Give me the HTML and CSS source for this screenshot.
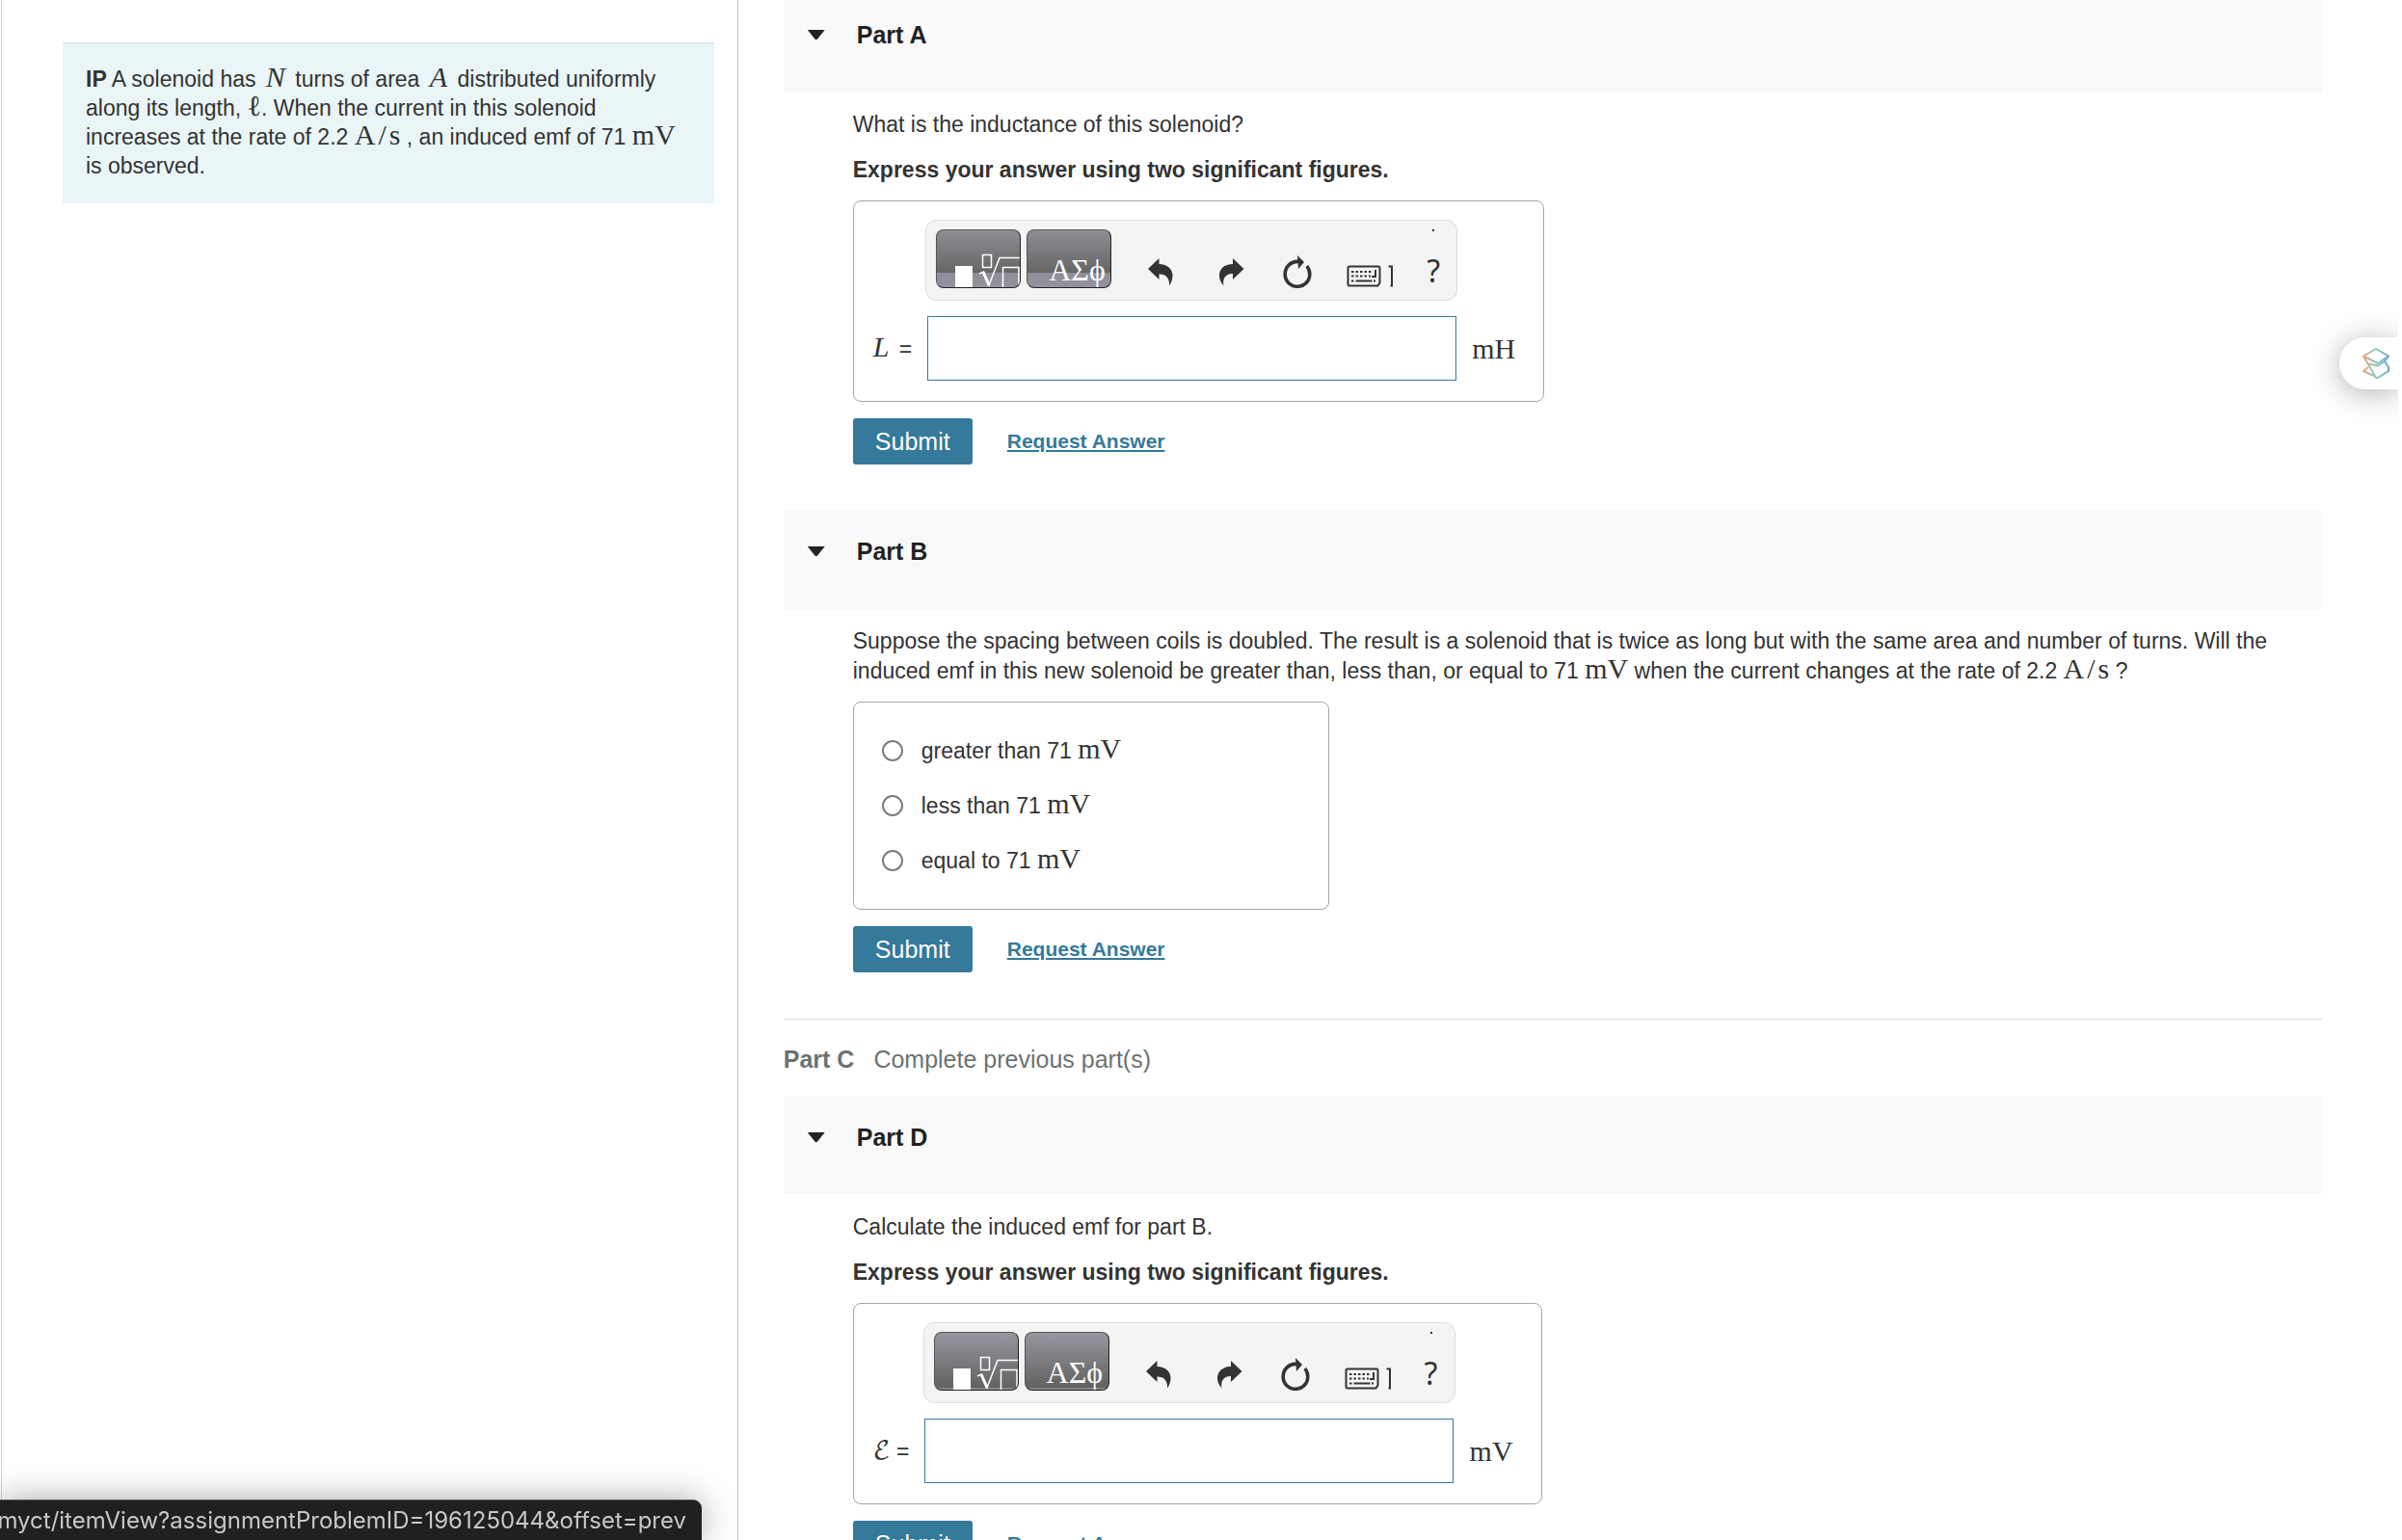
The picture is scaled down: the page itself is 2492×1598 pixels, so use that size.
FILE: index.html
```html
<!DOCTYPE html>
<html lang="en">
<head>
<meta charset="utf-8">
<meta name="viewport" content="width=device-width, initial-scale=1">
<title>Solenoid inductance</title>
<link rel="stylesheet" href="styles.css">
</head>
<body>
<svg class="sprite" aria-hidden="true">
  <symbol id="i-template" viewBox="0 0 88 61">
    <path d="M20 38h18v23H20z" fill="#fff"/>
    <path d="M48.500 26.500h9v13h-9z" fill="none" stroke="#fff" stroke-width="1.500"/>
    <path d="M45 46l4-2 6 14L66 29.500h22" fill="none" stroke="#fff" stroke-width="1.500"/>
    <path d="M49 44l6 14" fill="none" stroke="#fff" stroke-width="3"/>
    <path d="M69.500 61V39.500H86V61" fill="none" stroke="#fff" stroke-width="1.500"/>
  </symbol>
  <symbol id="i-undo" viewBox="0 0 26 30">
    <path d="M0 11L11.500 0v6C20 6 25.500 11 25.500 18c0 4-1.500 8-3.500 10.500C22.500 21 19 16.500 11.500 16.500V22z" fill="#333"/>
  </symbol>
  <symbol id="i-redo" viewBox="0 0 26 30">
    <path d="M25.500 11L14 0v6C5.500 6 0 11 0 18c0 4 2 8 4.500 10.500C3 21 6.500 16 14 16v6z" fill="#333"/>
  </symbol>
  <symbol id="i-reset" viewBox="0 0 30 34">
    <path d="M16.500 6.500C9 5.500 2.200 11.500 2.200 19.500c0 7.500 5.800 12.800 12.800 12.800s12.800-5.500 12.800-12.800c0-3.500-1-6-3-8.500" fill="none" stroke="#333" stroke-width="3.600"/>
    <path d="M15 0l7 7-6 7z" fill="#333"/>
  </symbol>
  <symbol id="i-keyboard" viewBox="0 0 50 24">
    <path d="M3 1.500h30q1.500 0 1.500 1.500v15.500l-2 3H3q-1.500 0-1.500-1.500V3Q1.500 1.500 3 1.500z" fill="none" stroke="#333" stroke-width="2"/>
    <path d="M5 7h22M5 11.500h20M5 16.500h3M28 16.500h2" fill="none" stroke="#333" stroke-width="2" stroke-dasharray="2.500 2"/>
    <path d="M9.500 16.500h17M30 5v8M26 12h5" fill="none" stroke="#333" stroke-width="2"/>
    <path d="M43.500 1.500h3.500V21.500h-1.500" fill="none" stroke="#333" stroke-width="2"/>
  </symbol>
</svg>

<div class="layout">
  <aside class="sidebar">
    <section class="problem">
      <p><b>IP</b> A solenoid has <i class="math">N</i> turns of area <i class="math">A</i> distributed uniformly along its length, <span class="math">ℓ</span>. When the current in this solenoid increases at the rate of 2.2 <span class="math">A<span class="slash">/</span>s</span> , an induced emf of 71 <span class="math">mV</span> is observed.</p>
    </section>
  </aside>

  <main class="content">
    <section class="part">
      <header class="part-header"><span class="caret"></span><h2>Part A</h2></header>
      <div class="part-body">
        <p>What is the inductance of this solenoid?</p>
        <p class="hint">Express your answer using two significant figures.</p>
        <form class="answer">
          <div class="toolbar">
            <button type="button" class="tool tool-dark" aria-label="Templates"><svg width="86" height="59" viewBox="1 1 86 59"><use href="#i-template" width="88" height="61"/></svg></button>
            <button type="button" class="tool tool-dark" aria-label="Symbols"><span class="greek">ΑΣϕ</span></button>
            <div class="tool-group">
              <button type="button" class="tool tool-wide" aria-label="Undo"><svg class="arrow" width="26" height="30"><use href="#i-undo"/></svg></button>
              <button type="button" class="tool tool-wide" aria-label="Redo"><svg class="arrow" width="26" height="30"><use href="#i-redo"/></svg></button>
              <button type="button" class="tool tool-reset" aria-label="Reset"><svg width="30" height="34"><use href="#i-reset"/></svg></button>
              <button type="button" class="tool tool-keys" aria-label="Keyboard shortcuts"><svg width="50" height="24"><use href="#i-keyboard"/></svg></button>
              <button type="button" class="tool tool-help" aria-label="Help"><span class="dot"></span><span class="question">?</span></button>
            </div>
          </div>
          <label class="symbol" for="answer-a"><i class="math">L</i> =</label>
          <input class="field" id="answer-a" type="text" autocomplete="off">
          <span class="unit math">mH</span>
        </form>
        <div class="actions"><button type="button" class="submit">Submit</button><a href="#request-a">Request Answer</a></div>
      </div>
    </section>

    <section class="part">
      <header class="part-header"><span class="caret"></span><h2>Part B</h2></header>
      <div class="part-body">
        <p>Suppose the spacing between coils is doubled. The result is a solenoid that is twice as long but with the same area and number of turns. Will the induced emf in this new solenoid be greater than, less than, or equal to 71 <span class="math">mV</span> when the current changes at the rate of 2.2 <span class="math">A<span class="slash">/</span>s</span> ?</p>
        <form class="choices">
          <label><input type="radio" name="emf" value="greater"><span>greater than 71 <span class="math">mV</span></span></label>
          <label><input type="radio" name="emf" value="less"><span>less than 71 <span class="math">mV</span></span></label>
          <label><input type="radio" name="emf" value="equal"><span>equal to 71 <span class="math">mV</span></span></label>
        </form>
        <div class="actions"><button type="button" class="submit">Submit</button><a href="#request-b">Request Answer</a></div>
      </div>
    </section>

    <section class="locked"><h2>Part C</h2><span>Complete previous part(s)</span></section>

    <section class="part">
      <header class="part-header"><span class="caret"></span><h2>Part D</h2></header>
      <div class="part-body">
        <p>Calculate the induced emf for part B.</p>
        <p class="hint">Express your answer using two significant figures.</p>
        <form class="answer">
          <div class="toolbar">
            <button type="button" class="tool tool-dark tool-full" aria-label="Templates"><svg width="86" height="59" viewBox="1 1 86 59"><use href="#i-template" width="88" height="61"/></svg></button>
            <button type="button" class="tool tool-dark tool-full" aria-label="Symbols"><span class="greek">ΑΣϕ</span></button>
            <div class="tool-group">
              <button type="button" class="tool tool-wide" aria-label="Undo"><svg class="arrow" width="26" height="30"><use href="#i-undo"/></svg></button>
              <button type="button" class="tool tool-wide" aria-label="Redo"><svg class="arrow" width="26" height="30"><use href="#i-redo"/></svg></button>
              <button type="button" class="tool tool-reset" aria-label="Reset"><svg width="30" height="34"><use href="#i-reset"/></svg></button>
              <button type="button" class="tool tool-keys" aria-label="Keyboard shortcuts"><svg width="50" height="24"><use href="#i-keyboard"/></svg></button>
              <button type="button" class="tool tool-help" aria-label="Help"><span class="dot"></span><span class="question">?</span></button>
            </div>
          </div>
          <label class="symbol" for="answer-d"><span class="script">ℰ</span> =</label>
          <input class="field" id="answer-d" type="text" autocomplete="off">
          <span class="unit math">mV</span>
        </form>
        <div class="actions"><button type="button" class="submit">Submit</button><a href="#request-d">Request Answer</a></div>
      </div>
    </section>
  </main>
</div>

<div class="widget-dock">
  <button type="button" class="widget" aria-label="Open assistant">
    <svg width="30" height="34" viewBox="0 0 30 34" fill="none" stroke="url(#rainbow)" stroke-width="2" stroke-linejoin="round">
      <defs><linearGradient id="rainbow" gradientUnits="userSpaceOnUse" x1="0" y1="0" x2="30" y2="0"><stop offset="0" stop-color="#f0a27c"/><stop offset=".5" stop-color="#8cc8bd"/><stop offset="1" stop-color="#6a9fd4"/></linearGradient></defs>
      <path d="M15 2L28 9.500 17 17 2 9.500z"/>
      <path d="M2 9.500L15 32 17 32 28 25V21L24 15 28 9.500"/>
      <path d="M7.500 17.500L17 19.500 24 15"/>
      <path d="M7 21L2 25 13 30"/>
    </svg>
  </button>
</div>
<div class="status"><span>myct/itemView?assignmentProblemID=196125044&amp;offset=prev</span></div>
</body>
</html>
```
FILE: styles.css
```css
* {
  box-sizing: border-box;
}

body {
  margin: 0;
  background: #fff;
  color: #333;
  font: 23px/30px "Liberation Sans", Arial, sans-serif;
}

p,
h2 {
  margin: 0;
}

button {
  margin: 0;
  padding: 0;
  border: 0;
  background: none;
  font: inherit;
}

.sprite {
  display: none;
}

.layout {
  display: flex;
  height: 100vh;
  padding-left: 1px;
  overflow: hidden;
}

.sidebar {
  flex: 0 0 30.7%;
  padding: 44px 24px 0 63px;
  border-left: 1px solid #ccd1d3;
  border-right: 1px solid #b9c3cc;
}

.problem {
  padding: 22px 20px 24px 24px;
  border-top: 1px solid #d5dfe0;
  background: #eaf5f7;
}

.math {
  font-family: "Liberation Serif", "Times New Roman", serif;
  font-size: 30px;
  line-height: 24px;
}

i.math {
  margin-right: 4px;
}

.problem i.math {
  margin-left: 4px;
}

.script {
  font-family: "DejaVu Math TeX Gyre", "DejaVu Serif", serif;
  font-size: 26px;
  line-height: 24px;
}

.slash {
  margin: 0 3px;
}

.content {
  flex: 1;
  min-width: 0;
  padding: 0 83px 0 47px;
}

.part-header {
  display: flex;
  align-items: flex-start;
  gap: 33px;
  height: 102px;
  padding: 27px 25px 0;
  background: #f9f9f9;
  color: #222;
}

.part:first-child .part-header {
  height: 96px;
  padding-top: 21px;
}

.caret {
  width: 18px;
  height: 10px;
  margin-top: 10px;
  background: #222;
  clip-path: polygon(0 0, 100% 0, 55% 100%, 45% 100%);
}

h2 {
  font-size: 25px;
  font-weight: bold;
  line-height: 30px;
}

.part-body {
  padding: 18px 0 48px 72px;
}

.part-body p {
  line-height: 31px;
}

.part-body .hint {
  margin-top: 16px;
  font-weight: bold;
}

.answer {
  display: grid;
  grid-template-columns: auto 552px auto;
  align-items: center;
  width: max-content;
  margin-top: 16px;
  padding: 19px 29px 21px 20px;
  border: 1px solid #a6a6a6;
  border-radius: 8px;
  row-gap: 16px;
}

.toolbar {
  grid-row: 1;
  grid-column: 2;
  display: flex;
  height: 84px;
  padding: 9px 4px 0 10px;
  border: 1px solid #ddd;
  border-radius: 11px;
  background: #f4f4f4;
}

.tool {
  display: flex;
  flex: none;
  align-items: flex-end;
  justify-content: center;
  height: 61px;
  color: #333;
}

.tool-dark {
  justify-content: flex-start;
  width: 88px;
  margin-right: 6px;
  overflow: hidden;
  border: 1px solid #555;
  border-right-color: #222;
  border-bottom-color: #222;
  border-radius: 8px;
  background: linear-gradient(#8f8e95, #666 74%, #8f8e98 75%, #94939d);
}

.tool-full {
  background: linear-gradient(#98969f, #626262 96%, #888 97%);
}

.greek {
  padding-left: 22px;
  color: #fff;
  font: 32px/36px "Liberation Serif", serif;
}

.tool-group {
  display: flex;
  padding-left: 8px;
}

.tool-wide {
  width: 74px;
}

.arrow {
  margin-bottom: 1px;
}

.tool-reset {
  width: 62px;
}

.tool-keys {
  width: 90px;
}

.tool-help {
  flex-direction: column;
  align-items: center;
  justify-content: space-between;
  width: 40px;
}

.dot {
  width: 2px;
  height: 2px;
  background: #333;
}

.question {
  font: 32px/36px "Noto Sans", sans-serif;
}

.symbol {
  grid-row: 2;
  grid-column: 1;
  padding-right: 14px;
}

.field {
  grid-row: 2;
  grid-column: 2;
  width: 549px;
  height: 67px;
  margin: 0 auto;
  padding: 0 12px;
  border: 1px solid #35799b;
  font: inherit;
}

.unit {
  grid-row: 2;
  grid-column: 3;
  padding-left: 15px;
}

.actions {
  display: flex;
  align-items: center;
  gap: 36px;
  margin-top: 17px;
}

.submit {
  width: 124px;
  height: 48px;
  border-radius: 3px;
  background: #35799b;
  color: #fff;
  font-size: 25px;
}

.actions a {
  color: #35799b;
  font-size: 21px;
  font-weight: bold;
  text-underline-offset: 2px;
}

.choices {
  width: 494px;
  height: 216px;
  margin-top: 16px;
  padding: 35px 29px;
  border: 1px solid #a6a6a6;
  border-radius: 8px;
}

.choices label {
  display: flex;
  align-items: center;
  gap: 19px;
  height: 30px;
  margin-bottom: 27px;
}

.choices input {
  appearance: none;
  width: 22px;
  height: 22px;
  margin: 0;
  border: 2px solid #7c7c7c;
  border-radius: 50%;
}

.locked {
  display: flex;
  gap: 20px;
  height: 81px;
  padding-top: 26px;
  border-top: 1px solid #ddd;
  color: #6b7371;
  font-size: 25px;
}

.widget-dock {
  position: fixed;
  top: 310px;
  right: 4px;
  width: 110px;
  padding: 40px 0 60px 49px;
  overflow: hidden;
}

.widget {
  display: flex;
  align-items: center;
  justify-content: flex-end;
  width: 61px;
  height: 54px;
  padding-right: 8px;
  border-radius: 27px 0 0 27px;
  background: #fff;
  box-shadow: 0 4px 30px rgba(0, 0, 0, 0.3);
}

.status {
  position: fixed;
  bottom: 0;
  left: 0;
  display: flex;
  justify-content: flex-end;
  width: 728px;
  height: 42px;
  padding-right: 16px;
  border-top: 1px solid #555;
  border-radius: 0 9px 0 0;
  background: #1f2020;
  box-shadow: 0 0 34px rgba(0, 0, 0, 0.35);
  color: #c8c8c8;
  font: 24px/41px Inter, sans-serif;
  white-space: nowrap;
}
```
